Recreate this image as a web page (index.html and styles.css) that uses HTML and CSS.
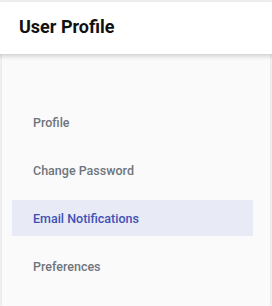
FILE: index.html
```html
<!DOCTYPE html>
<html lang="en">
<head>
  <meta charset="UTF-8">
  <meta name="viewport" content="width=device-width, initial-scale=1.0">
  <title>User Profile</title>
  <link rel="stylesheet" href="styles.css">
</head>
<body>
  <header class="app-bar">
    <h1>User Profile</h1>
  </header>

  <div class="page">
    <nav class="sidebar">
      <ul class="nav-list">
        <li class="nav-item">Profile</li>
        <li class="nav-item">Change Password</li>
        <li class="nav-item active">Email Notifications</li>
        <li class="nav-item">Preferences</li>
      </ul>
    </nav>
  </div>
</body>
</html>
```

FILE: styles.css
```css
body {
  font-family: Roboto, 'Noto Sans', sans-serif;
  margin: 0;
  padding-top: 2px;
  background-color: #f2f2f2;
  color: #333;
  height: 304px;
  overflow: hidden;
}

.app-bar {
  background-color: white;
  height: 52px;
  margin: 0 -4px;
  padding: 0 23px;
  display: flex;
  align-items: center;
  box-shadow: 0 2px 5px rgba(0,0,0,0.18);
  position: relative;
  z-index: 1;
}

.app-bar h1 {
  margin: 0;
  font-size: 18px;
  font-weight: 700;
  color: #111;
  padding-bottom: 4px;
}

.page {
  padding: 0 2px;
  height: 252px;
}

.sidebar {
  background-color: #fafafa;
  height: 100%;
  box-shadow: 0 0 3px rgba(0,0,0,0.08);
}

.nav-list {
  list-style: none;
  margin: 0;
  padding: 50px 17px 0 10px;
  display: flex;
  flex-direction: column;
  gap: 12px;
}

.nav-item {
  height: 36px;
  display: flex;
  align-items: center;
  padding: 0 21px;
  font-size: 12.5px;
  font-weight: 500;
  color: #6f757d;
}

.nav-item.active {
  background-color: #e8eaf6;
  color: #3f51b5;
}
```
